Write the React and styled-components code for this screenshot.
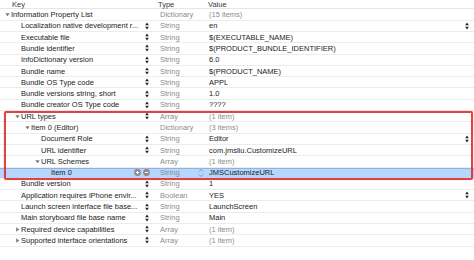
import React from 'react';
import styled, { createGlobalStyle } from 'styled-components';

const GlobalStyle = createGlobalStyle`
	html, body {
		margin: 0;
		padding: 0;
		background: #ffffff;
	}
	body {
		font-family: "Liberation Sans", Arial, sans-serif;
		-webkit-font-smoothing: antialiased;
	}
`;

const Table = styled.div`
	position: relative;
	width: 474px;
	height: 260px;
	overflow: hidden;
	background: #fff;
	font-size: 7.5px;
	color: #1c1c1c;
`;

const Columns = styled.div`
	display: grid;
	grid-template-columns: 152px 53px 1fr;
	align-items: center;
	box-sizing: border-box;
`;

const Header = styled(Columns)`
	height: 9.4px;
	color: #3a3a3a;
	border-bottom: 1px solid #e6e6e6;
`;

const HeadCell = styled.div`
	padding-left: ${p => p.pad}px;
	line-height: 9px;
`;

const Row = styled(Columns)`
	height: 11.3px;
	border-bottom: 1px solid #ececec;
	background: ${p => (p.selected ? '#b6d6fb' : '#fff')};
	box-shadow: ${p => (p.selected ? 'inset 0 1px 0 #8db3e2' : 'none')};
`;

const KeyCell = styled.div`
	display: flex;
	align-items: center;
	height: 100%;
	padding-left: ${p => 5 + p.level * 10}px;
	padding-right: 3px;
	white-space: nowrap;
	overflow: hidden;
`;

const Toggle = styled.span`
	display: inline-flex;
	width: 6px;
	flex: none;
	align-items: center;
	color: #7a7a7a;
`;

const KeyText = styled.span`
	flex: 1;
	overflow: hidden;
`;

const TypeCell = styled.div`
	display: flex;
	align-items: center;
	justify-content: space-between;
	height: 100%;
	padding-left: 8px;
	padding-right: 1px;
	color: #8c8c8c;
`;

const ValueCell = styled.div`
	display: flex;
	align-items: center;
	justify-content: space-between;
	height: 100%;
	padding-left: 4px;
	padding-right: 5px;
	color: ${p => (p.muted ? '#8c8c8c' : '#1c1c1c')};
	white-space: nowrap;
`;

const RowActions = styled.span`
	display: inline-flex;
	gap: 2px;
	margin-right: -1px;
`;

const Highlight = styled.div`
	position: absolute;
	left: 4px;
	top: 111px;
	width: 469px;
	height: 69px;
	box-sizing: border-box;
	border: 2px solid rgba(222, 46, 46, 0.9);
	border-radius: 2px;
	box-shadow: 0 0 1px rgba(222, 46, 46, 0.6);
	pointer-events: none;
`;

const Triangle = ({ open }) => (
	<svg width="5" height="5" viewBox="0 0 5 5">
		{open ? <path d="M0.3 1.2 L4.7 1.2 L2.5 4.2 Z" fill="#7a7a7a" /> : <path d="M1.2 0.3 L4.2 2.5 L1.2 4.7 Z" fill="#7a7a7a" />}
	</svg>
);

const Stepper = () => (
	<svg width="4" height="8" viewBox="0 0 4 8">
		<path d="M0.2 3.2 L2 0.6 L3.8 3.2 Z" fill="#222" />
		<path d="M0.2 4.8 L3.8 4.8 L2 7.4 Z" fill="#222" />
	</svg>
);

const Chevrons = () => (
	<svg width="6" height="10" viewBox="0 0 6 10">
		<path d="M1 3.6 L3 1.4 L5 3.6" fill="none" stroke="#6f8fb8" strokeWidth="0.8" />
		<path d="M1 6.4 L3 8.6 L5 6.4" fill="none" stroke="#6f8fb8" strokeWidth="0.8" />
	</svg>
);

const RoundButton = ({ minus }) => (
	<svg width="7" height="7" viewBox="0 0 7 7">
		<circle cx="3.5" cy="3.5" r="3.4" fill="#8a8a8a" />
		<path d="M1.8 3.5 H5.2" stroke="#fff" strokeWidth="1" />
		{!minus && <path d="M3.5 1.8 V5.2" stroke="#fff" strokeWidth="1" />}
	</svg>
);

const rows = [
	{ level: 0, toggle: 'open', key: 'Information Property List', type: 'Dictionary', value: '(15 items)', muted: true },
	{ level: 1, key: 'Localization native development r...', type: 'String', value: 'en', step: true, valueStep: true },
	{ level: 1, key: 'Executable file', type: 'String', value: '$(EXECUTABLE_NAME)', step: true },
	{ level: 1, key: 'Bundle identifier', type: 'String', value: '$(PRODUCT_BUNDLE_IDENTIFIER)', step: true },
	{ level: 1, key: 'InfoDictionary version', type: 'String', value: '6.0', step: true },
	{ level: 1, key: 'Bundle name', type: 'String', value: '$(PRODUCT_NAME)', step: true },
	{ level: 1, key: 'Bundle OS Type code', type: 'String', value: 'APPL', step: true },
	{ level: 1, key: 'Bundle versions string, short', type: 'String', value: '1.0', step: true },
	{ level: 1, key: 'Bundle creator OS Type code', type: 'String', value: '????', step: true },
	{ level: 1, toggle: 'open', key: 'URL types', type: 'Array', value: '(1 item)', muted: true, step: true },
	{ level: 2, toggle: 'open', key: 'Item 0 (Editor)', type: 'Dictionary', value: '(3 items)', muted: true },
	{ level: 3, key: 'Document Role', type: 'String', value: 'Editor', step: true, valueStep: true },
	{ level: 3, key: 'URL identifier', type: 'String', value: 'com.jmsliu.CustomizeURL', step: true },
	{ level: 3, toggle: 'open', key: 'URL Schemes', type: 'Array', value: '(1 item)', muted: true },
	{ level: 4, key: 'Item 0', type: 'String', value: 'JMSCustomizeURL', selected: true },
	{ level: 1, key: 'Bundle version', type: 'String', value: '1', step: true },
	{ level: 1, key: 'Application requires iPhone envir...', type: 'Boolean', value: 'YES', step: true, valueStep: true },
	{ level: 1, key: 'Launch screen interface file base...', type: 'String', value: 'LaunchScreen', step: true },
	{ level: 1, key: 'Main storyboard file base name', type: 'String', value: 'Main', step: true },
	{ level: 1, toggle: 'closed', key: 'Required device capabilities', type: 'Array', value: '(1 item)', muted: true, step: true },
	{ level: 1, toggle: 'closed', key: 'Supported interface orientations', type: 'Array', value: '(1 item)', muted: true, step: true },
];

const PlistRow = ({ row }) => (
	<Row selected={row.selected}>
		<KeyCell level={row.level}>
			<Toggle>{row.toggle && <Triangle open={row.toggle === 'open'} />}</Toggle>
			<KeyText>{row.key}</KeyText>
			{row.step && <Stepper />}
			{row.selected && (
				<RowActions>
					<RoundButton />
					<RoundButton minus />
				</RowActions>
			)}
		</KeyCell>
		<TypeCell>
			<span>{row.type}</span>
			{row.selected && <Chevrons />}
		</TypeCell>
		<ValueCell muted={row.muted}>
			<span>{row.value}</span>
			{row.valueStep && <Stepper />}
		</ValueCell>
	</Row>
);

export default function App() {
	return (
		<>
			<GlobalStyle />
			<Table>
				<Header>
					<HeadCell pad={12}>Key</HeadCell>
					<HeadCell pad={6}>Type</HeadCell>
					<HeadCell pad={3}>Value</HeadCell>
				</Header>
				{rows.map((row, i) => (
					<PlistRow key={i} row={row} />
				))}
				<Highlight />
			</Table>
		</>
	);
}
